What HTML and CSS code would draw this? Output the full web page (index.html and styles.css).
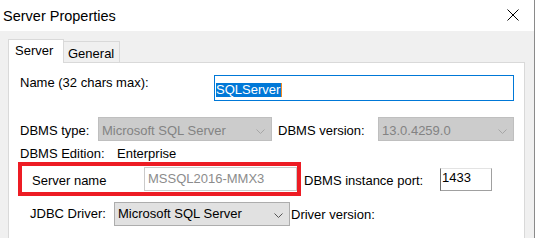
FILE: index.html
```html
<!DOCTYPE html>
<html>
<head>
<meta charset="utf-8">
<link rel="stylesheet" href="styles.css">
</head>
<body>
<div class="window">
  <div class="titlebar">
    <span class="title">Server Properties</span>
    <svg class="close" width="12" height="12" viewBox="0 0 12 12"><path d="M0.5 0.5 L11.5 11.5 M11.5 0.5 L0.5 11.5" stroke="#000" stroke-width="1" fill="none"/></svg>
  </div>
  <div class="client">
    <div class="tabs">
      <div class="tab tab-active">Server</div>
      <div class="tab tab-inactive">General</div>
    </div>
    <div class="panel">
      <div class="row row-name">
        <span class="lbl lbl-name">Name (32 chars max):</span>
        <div class="textbox textbox-focus"><span class="sel">SQLServer</span></div>
      </div>
      <div class="row row-type">
        <span class="lbl lbl-type">DBMS type:</span>
        <div class="combo combo-disabled combo-type">
          <span>Microsoft SQL Server</span>
          <svg width="9" height="5" viewBox="0 0 9 5"><polyline points="0.5,0.5 4.5,4.5 8.5,0.5" fill="none" stroke="#a6a6a6" stroke-width="1"/></svg>
        </div>
        <span class="lbl lbl-version">DBMS version:</span>
        <div class="combo combo-disabled combo-version">
          <span>13.0.4259.0</span>
          <svg width="9" height="5" viewBox="0 0 9 5"><polyline points="0.5,0.5 4.5,4.5 8.5,0.5" fill="none" stroke="#a6a6a6" stroke-width="1"/></svg>
        </div>
      </div>
      <div class="row row-edition">
        <span class="lbl lbl-edition">DBMS Edition:</span>
        <span class="lbl">Enterprise</span>
      </div>
      <div class="row row-server">
        <span class="lbl lbl-server">Server name</span>
        <div class="textbox textbox-ro">MSSQL2016-MMX3</div>
        <span class="lbl lbl-port">DBMS instance port:</span>
        <div class="textbox textbox-port">1433</div>
        <div class="mark"></div>
      </div>
      <div class="row row-jdbc">
        <span class="lbl lbl-jdbc">JDBC Driver:</span>
        <div class="combo combo-enabled combo-jdbc">
          <span>Microsoft SQL Server</span>
          <svg width="9" height="5" viewBox="0 0 9 5"><polyline points="0.5,0.5 4.5,4.5 8.5,0.5" fill="none" stroke="#555555" stroke-width="1"/></svg>
        </div>
        <span class="lbl lbl-driver">Driver version:</span>
      </div>
    </div>
  </div>
</div>
</body>
</html>
```
FILE: styles.css
```css
* { box-sizing: border-box; }
html, body { margin: 0; padding: 0; background: #ffffff; }
body {
  font-family: "Liberation Sans", Arial, sans-serif;
  font-size: 13px;
  color: #000;
  width: 537px;
  height: 238px;
  overflow: hidden;
}
.window {
  width: 535px;
  height: 238px;
  border-right: 1px solid #8a8a8a;
  background: #f0f0f0;
  overflow: hidden;
}
.titlebar {
  height: 31px;
  background: #ffffff;
  display: flex;
  justify-content: space-between;
  align-items: flex-start;
  padding: 0 15px 0 3px;
}
.title { font-size: 14.5px; line-height: 18px; margin-top: 7px; }
.close { margin-top: 9px; flex: none; }
.client { padding: 8px 0 0 8px; }
.tabs { display: flex; align-items: flex-end; }
.tab {
  line-height: 15px;
  border: 1px solid #d9d9d9;
  border-bottom: none;
  width: 56px;
  white-space: nowrap;
}
.tab-active {
  position: relative;
  background: #ffffff;
  height: 24px;
  margin-bottom: -1px;
  padding: 3px 0 0 6px;
}
.tab-inactive {
  background: #f0f0f0;
  height: 21px;
  border-left: none;
  padding: 4px 0 0 4px;
}
.panel {
  width: 517px;
  height: 200px;
  border: 1px solid #d9d9d9;
  background: #ffffff;
  padding: 12px 0 0 11px;
}
.row { display: flex; align-items: flex-start; }
.lbl { line-height: 15px; white-space: nowrap; flex: none; }

.row-name { height: 26px; }
.lbl-name { width: 194px; }
.textbox { flex: none; background: #ffffff; line-height: 15px; white-space: nowrap; }
.textbox-focus {
  display: flex;
  align-items: flex-start;
  width: 300px;
  height: 26px;
  border: 1px solid #0078d7;
  padding: 7px 0 0 1px;
}
.sel {
  background: #0078d7;
  color: #ffffff;
  line-height: 14px;
  padding-right: 1px;
  border-right: 1px solid #f08a24;
}

.row-type { margin-top: 16px; height: 24px; }
.lbl-type { width: 78px; margin-top: 6px; }
.lbl-version { width: 100px; margin-left: 6px; margin-top: 6px; }
.combo {
  flex: none;
  display: flex;
  justify-content: space-between;
  align-items: flex-start;
  height: 24px;
  line-height: 15px;
  white-space: nowrap;
  padding: 5px 6px 0 3px;
}
.combo svg { flex: none; margin-top: 6px; }
.combo-disabled { background: #cccccc; border: 1px solid #bfbfbf; color: #838383; }
.combo-type { width: 174px; }
.combo-version { width: 136px; }
.combo-enabled { background: #e1e1e1; border: 1px solid #adadad; color: #000; padding-top: 3px; }
.combo-enabled svg { margin-top: 7px; }
.combo-jdbc { width: 176px; }

.row-edition { margin-top: 5px; }
.lbl-edition { width: 97px; }

.row-server { margin-top: 6px; height: 24px; position: relative; }
.lbl-server { width: 112px; margin-left: 12px; margin-top: 6px; }
.textbox-ro {
  width: 153px;
  height: 24px;
  border: 1px solid #cacaca;
  color: #8c8c8c;
  padding: 3px 0 0 3px;
}
.lbl-port { width: 136px; margin-left: 7px; margin-top: 6px; }
.textbox-port {
  width: 52px;
  height: 23px;
  margin-top: 1px;
  border-left: 1px solid #6d6d6d;
  border-top: 1px solid #e3e3e3;
  border-right: 1px solid #a0a0a0;
  border-bottom: 1px solid #a0a0a0;
  padding: 1px 0 0 1px;
}
.mark {
  position: absolute;
  left: -2px;
  top: -5px;
  width: 283px;
  height: 34px;
  border: 4px solid #ed1c24;
  pointer-events: none;
}

.row-jdbc { margin-top: 11px; height: 24px; }
.lbl-jdbc { width: 84px; margin-left: 10px; margin-top: 4px; }
.lbl-driver { margin-left: 1px; margin-top: 5px; }
```
